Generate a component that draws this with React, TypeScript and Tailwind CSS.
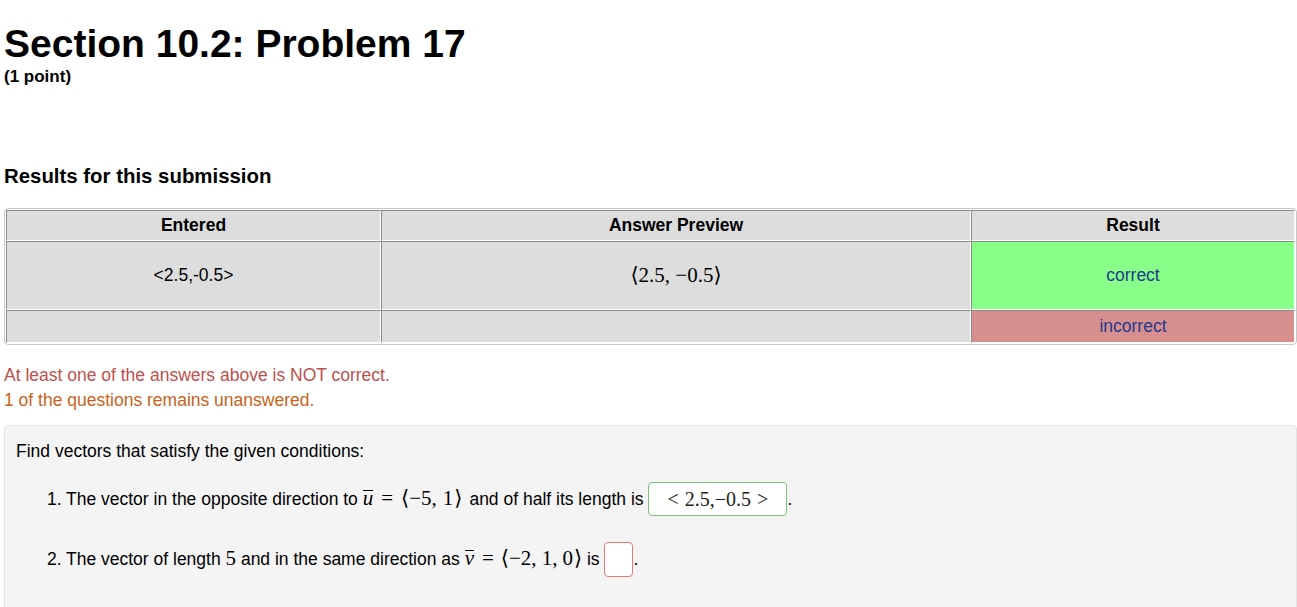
import React from 'react';

const serif = "font-['Liberation_Serif','DejaVu_Serif',serif]";

// Cell with the classic inset table border
function Cell({ children, className = '' }: { children?: React.ReactNode; className?: string }) {
  return (
    <td
      className={`border border-t-[#8a8a8a] border-l-[#8a8a8a] border-b-white border-r-white p-0 text-center align-middle ${className}`}
    >
      {children}
    </td>
  );
}

function Bar({ children }: { children: React.ReactNode }) {
  return (
    <span className="inline-block border-t-[1.5px] border-black leading-[12px] italic pt-[1px] mr-[1px]">
      {children}
    </span>
  );
}

function Eq() {
  return <span className="mx-[7px]">=</span>;
}

export default function App() {
  return (
    <div className="min-h-screen bg-white pl-1 text-black font-['Liberation_Sans',Arial,sans-serif]">
      <h1 className="pt-[22px] text-[39px] font-bold leading-[44px]">Section 10.2: Problem 17</h1>
      <div className="mt-px text-[17px] font-bold leading-[20px]">(1 point)</div>

      <h3 className="mt-[77px] text-[20.4px] font-bold leading-[24px]">Results for this submission</h3>

      {/* Results table */}
      <div className="mt-[20px] rounded-[4px] border border-[#c8c8c8] p-px">
        <table className="w-full border-separate border-spacing-0 text-[17.5px]">
          <thead>
            <tr className="h-[31px] bg-[#dddddd]">
              <Cell className="w-[375px] font-bold">Entered</Cell>
              <Cell className="w-[590px] font-bold">Answer Preview</Cell>
              <Cell className="font-bold">Result</Cell>
            </tr>
          </thead>
          <tbody>
            <tr className="h-[69px] bg-[#dddddd]">
              <Cell>&lt;2.5,-0.5&gt;</Cell>
              <Cell>
                <span className={`${serif} text-[21px]`}>⟨2.5, −0.5⟩</span>
              </Cell>
              <Cell className="bg-[#88ff88] text-[#1e3a8c]">correct</Cell>
            </tr>
            <tr className="h-[33px] bg-[#dddddd]">
              <Cell />
              <Cell />
              <Cell className="bg-[#d68f8e] text-[#1e3a8c]">incorrect</Cell>
            </tr>
          </tbody>
        </table>
      </div>

      <div className="mt-[18px] text-[17.5px] leading-[25px]">
        <div className="text-[#c0504d]">At least one of the answers above is NOT correct.</div>
        <div className="text-[#c8621a]">1 of the questions remains unanswered.</div>
      </div>

      {/* Problem text */}
      <div className="mt-[12px] h-[200px] rounded-[4px] border border-[#e3e3e3] bg-[#f4f4f4] px-[11px] pt-[13px] text-[17.5px]">
        <div className="leading-[24px]">Find vectors that satisfy the given conditions:</div>

        <div className="mt-[18px] flex h-[36px] items-center pl-[31px]">
          <span className="w-[19px]">1.</span>
          <span>The vector in the opposite direction to&nbsp;</span>
          <span className={`${serif} text-[21px]`}>
            <Bar>u</Bar>
            <Eq />
            <span className="ml-[1px]">⟨−5,</span>
            <span className="ml-[6px]">1</span>
            <span className="ml-[1px] mr-[2px]">⟩</span>
          </span>
          <span>&nbsp;and of half its length is&nbsp;</span>
          <span
            className={`flex h-[34px] w-[139px] items-center justify-center rounded-[4px] border border-[#7cc47c] bg-white ${serif} text-[20px] text-[#222]`}
          >
            <span className="mr-[6px]">&lt;</span>2.5,−0.5<span className="ml-[6px]">&gt;</span>
          </span>
          <span>.</span>
        </div>

        <div className="mt-[24px] flex h-[36px] items-center pl-[31px]">
          <span className="w-[19px]">2.</span>
          <span>The vector of length&nbsp;</span>
          <span className={`${serif} text-[21px]`}>5</span>
          <span>&nbsp;and in the same direction as&nbsp;</span>
          <span className={`${serif} text-[21px]`}>
            <Bar>v</Bar>
            <Eq />⟨−2,<span className="ml-[5px]">1,</span>
            <span className="ml-[5px]">0</span>
            <span className="ml-[1px]">⟩</span>
          </span>
          <span>&nbsp;is&nbsp;</span>
          <span className="h-[35px] w-[29px] rounded-[4px] border border-[#e07a7a] bg-white" />
          <span>.</span>
        </div>
      </div>
    </div>
  );
}
